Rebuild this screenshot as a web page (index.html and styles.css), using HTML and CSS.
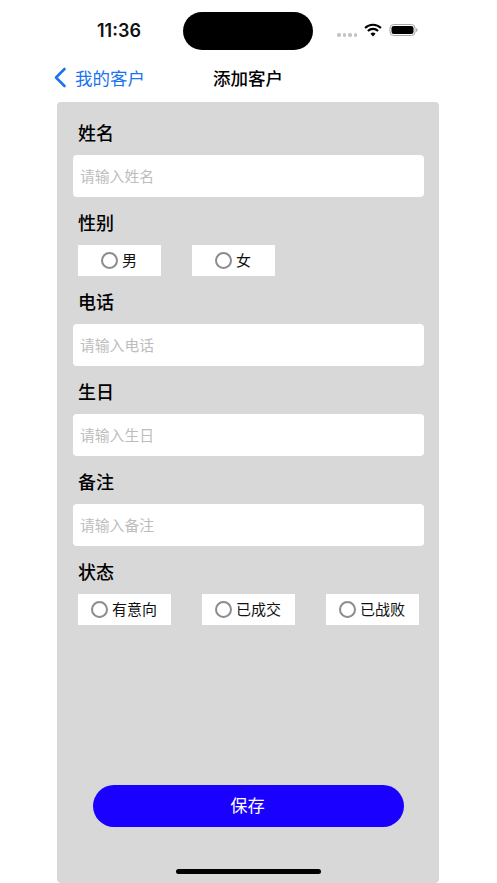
FILE: index.html
```html
<!DOCTYPE html>
<html lang="zh">
<head>
<meta charset="utf-8">
<title>添加客户</title>
<link rel="stylesheet" href="styles.css">
</head>
<body>
<div class="phone">
  <header class="status">
    <span class="time">11:36</span>
    <span class="island"></span>
    <div class="indicators">
      <span class="signal"><i></i><i></i><i></i><i></i></span>
      <svg class="wifi" width="18" height="14" viewBox="0 0 17 13"><path d="M1 4.6a10.6 10.6 0 0 1 15 0" fill="none" stroke="#000" stroke-width="2"/><path d="M3.7 7.4a6.8 6.8 0 0 1 9.6 0" fill="none" stroke="#000" stroke-width="2"/><path d="M8.5 12.6 6.1 10a3.4 3.4 0 0 1 4.8 0z" fill="#000"/></svg>
      <svg class="battery" width="29" height="14" viewBox="0 0 29 14"><rect x="1" y="1.5" width="25" height="11" rx="3.5" fill="none" stroke="#a8a8a8" stroke-width="1"/><rect x="2.5" y="3" width="22" height="8" rx="2.2" fill="#000"/><path d="M27 5.2c1 .3 1.5 1 1.5 1.8s-.5 1.5-1.5 1.8z" fill="#a8a8a8"/></svg>
    </div>
  </header>
  <nav class="nav">
    <a class="back">
      <svg width="14" height="21" viewBox="0 0 14 21"><path d="M11.5 2 3 10.5l8.5 8.5" fill="none" stroke="#1a73f0" stroke-width="2.6" stroke-linecap="round" stroke-linejoin="round"/></svg>
      <span>我的客户</span>
    </a>
    <h1 class="title">添加客户</h1>
  </nav>
  <main class="panel">
    <section class="field">
      <label class="label">姓名</label>
      <div class="input">请输入姓名</div>
    </section>
    <section class="field">
      <label class="label">性别</label>
      <div class="radios radios-two">
        <div class="radio"><span class="dot"></span>男</div>
        <div class="radio"><span class="dot"></span>女</div>
      </div>
    </section>
    <section class="field">
      <label class="label">电话</label>
      <div class="input">请输入电话</div>
    </section>
    <section class="field">
      <label class="label">生日</label>
      <div class="input">请输入生日</div>
    </section>
    <section class="field">
      <label class="label">备注</label>
      <div class="input">请输入备注</div>
    </section>
    <section class="field">
      <label class="label">状态</label>
      <div class="radios radios-three">
        <div class="radio"><span class="dot"></span>有意向</div>
        <div class="radio"><span class="dot"></span>已成交</div>
        <div class="radio"><span class="dot"></span>已战败</div>
      </div>
    </section>
    <button class="save">保存</button>
    <span class="home"></span>
  </main>
</div>
</body>
</html>
```
FILE: styles.css
```css
* { box-sizing: border-box; }
html, body { margin: 0; padding: 0; background: #fff; }
body { font-family: "Noto Sans CJK SC", "Noto Sans", sans-serif; color: #000; }
.phone { width: 497px; height: 883px; overflow: hidden; display: flex; flex-direction: column; }

.status { height: 58px; padding: 12px 0 0 97px; display: flex; align-items: flex-start; }
.time { font-family: Inter, "Liberation Sans", sans-serif; font-size: 18px; font-weight: 600; line-height: 37px; width: 86px; color: #111; }
.island { width: 130px; height: 38px; border-radius: 19px; background: #000; }
.indicators { display: flex; align-items: center; margin-left: 24px; height: 36px; }
.signal { display: flex; gap: 2px; margin-top: 10px; }
.signal i { width: 3.5px; height: 3.5px; border-radius: 50%; background: #c4c4c4; }
.wifi { margin-left: 7px; margin-top: -1px; }
.battery { margin-left: 7px; }

.nav { height: 44px; position: relative; display: flex; align-items: center; justify-content: center; }
.back { position: absolute; left: 53px; top: -1px; height: 41px; display: flex; align-items: center; gap: 8px; color: #1a73f0; font-size: 17.5px; font-weight: 400; }
.title { margin: 0 1px 5px 0; font-size: 17.5px; font-weight: 500; line-height: 24px; }

.panel { position: relative; flex: 1; margin: 0 58px 0 57px; background: #d8d8d8; border-radius: 4px; padding: 19px 15px 0 16px; }
.field { margin-bottom: 14px; }
.label { display: block; margin-left: 5px; font-size: 18px; line-height: 22px; font-weight: 500; margin-bottom: 12px; }
.input { height: 42px; background: #fff; border-radius: 4px; padding-left: 7px; font-size: 14.8px; line-height: 41px; color: #bdbdbd; }
.radios { display: flex; margin-left: 5px; }
.radios-two { gap: 31px; }
.radios-three { gap: 31px; }
.radio { height: 31px; background: #fff; display: flex; align-items: center; justify-content: center; gap: 4px; padding: 0 1px 2px 0; font-size: 15px; color: #111; }
.radios-two .radio { width: 83px; }
.radios-three .radio { width: 93px; }
.dot { width: 17px; height: 17px; margin-top: 2px; border-radius: 50%; border: 2px solid #8c8c8c; background: #fff; }

.save { position: absolute; left: 36px; top: 683px; width: 311px; height: 42px; padding: 0 2px 4px 0; border: 0; border-radius: 21px; background: #1a00ff; color: #fff; font-family: inherit; font-size: 17.25px; font-weight: 400; }
.home { position: absolute; left: 119px; top: 767px; width: 145px; height: 5px; border-radius: 3px; background: #000; }
```
